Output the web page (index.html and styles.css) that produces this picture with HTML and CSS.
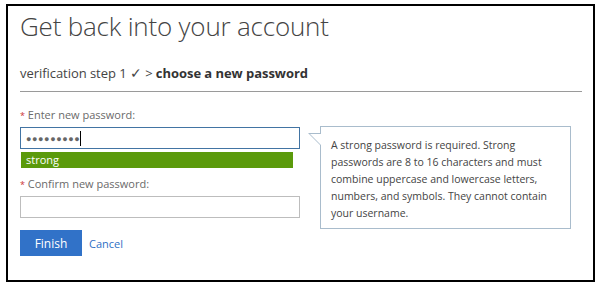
FILE: index.html
```html
<!DOCTYPE html>
<html lang="en">
<head>
<meta charset="utf-8">
<title>Get back into your account</title>
<link rel="stylesheet" href="styles.css">
</head>
<body>
<div class="frame">
  <h1 class="title">Get back into your account</h1>
  <div class="steps">verification step 1 <span class="check">✓</span> <span class="gt">&gt;</span> <strong>choose a new password</strong></div>
  <div class="sep"></div>
  <div class="body">
    <div class="form">
      <label class="label"><span class="req">*</span> Enter new password:</label>
      <div class="input focus"><span class="dots">●●●●●●●●●</span><span class="caret"></span></div>
      <div class="strength">strong</div>
      <label class="label label2"><span class="req">*</span> Confirm new password:</label>
      <div class="input"></div>
      <div class="actions">
        <button class="btn">Finish</button>
        <a class="cancel" href="#">Cancel</a>
      </div>
    </div>
    <div class="tip">
      <p>A strong password is required. Strong passwords are 8 to 16 characters and must combine uppercase and lowercase letters, numbers, and symbols. They cannot contain your username.</p>
    </div>
  </div>
</div>
</body>
</html>
```
FILE: styles.css
```css
html, body { margin: 0; padding: 0; background: #fff; }
body { font-family: "Open Sans", "Noto Sans", sans-serif; color: #333; }
.frame {
  margin: 4px 0 0 6px;
  width: 589px;
  height: 278px;
  box-sizing: border-box;
  border: 2px solid #000;
  padding: 4px 12px 0 12px;
}
.title {
  margin: 0;
  font-weight: 300;
  font-size: 26px;
  line-height: 32px;
  color: #444;
  letter-spacing: -0.2px;
}
.steps {
  margin-top: 22px;
  font-size: 13px;
  line-height: 18px;
  color: #444;
  letter-spacing: -0.05px;
}
.check { font-size: 14px; line-height: 0; }
.steps strong { font-weight: 700; color: #333; }
.sep { margin-top: 9px; height: 1px; background: #9a9a9a; width: 562px; }
.body { display: flex; align-items: flex-start; }
.form { width: 280px; display: flex; flex-direction: column; }
.label {
  margin-top: 15px;
  font-size: 11px;
  line-height: 15px;
  color: #6a6a6a;
}
.label2 { margin-top: 8px; }
.req { color: #c33; font-size: 9px; line-height: 0; }
.input {
  margin-top: 5px;
  box-sizing: border-box;
  width: 280px;
  height: 22px;
  border: 1px solid #bdbdbd;
  display: flex;
  align-items: center;
  padding-left: 5px;
}
.input.focus { border-color: #4274a3; }
.dots { font-size: 9px; letter-spacing: 0.6px; color: #666; line-height: 1; }
.caret { width: 1px; height: 15px; background: #000; margin-left: 0; }
.strength {
  margin: 3px 0 0 1px;
  width: 272px;
  height: 16px;
  box-sizing: border-box;
  background: #5b9a0b;
  color: #fff;
  font-size: 11px;
  line-height: 16px;
  padding-left: 5px;
}
.actions { margin-top: 12px; display: flex; align-items: center; gap: 7px; }
.btn {
  width: 62px;
  height: 26px;
  border: 0;
  background: #3172c8;
  color: #fff;
  font-family: inherit;
  font-size: 12px;
  padding: 0;
}
.cancel { color: #2f6fc4; font-size: 11px; text-decoration: none; }
.tip {
  position: relative;
  margin: 34px 0 0 20px;
  width: 251px;
  height: 103px;
  box-sizing: border-box;
  border: 1px solid #a9bccc;
  padding: 10px 10px 0 10px;
}
.tip::before {
  content: "";
  position: absolute;
  left: -13px;
  top: 6px;
  width: 0; height: 0;
  border-top: 12px solid #a9bccc;
  border-left: 12px solid transparent;
}
.tip::after {
  content: "";
  position: absolute;
  left: -11px;
  top: 7px;
  width: 0; height: 0;
  border-top: 11px solid #fff;
  border-left: 11px solid transparent;
}
.tip p { margin: 0; font-size: 10.5px; line-height: 17px; color: #444; }
```
